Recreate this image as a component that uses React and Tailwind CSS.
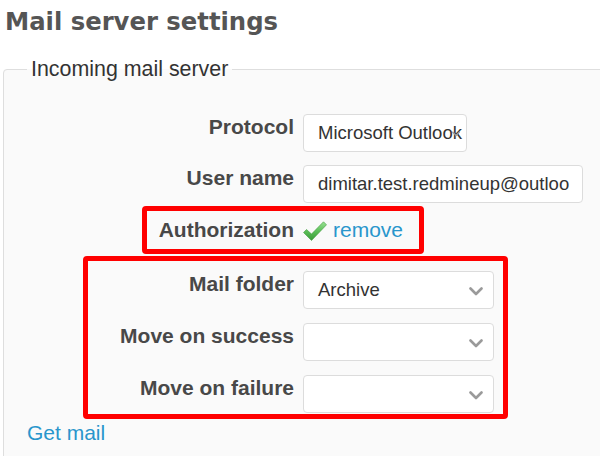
import React from 'react';

const SANS = { fontFamily: '"Liberation Sans", Arial, sans-serif' };

function Chevron({ className = '' }) {
  return (
    <svg viewBox="0 0 14 9" className={className} fill="none">
      <path d="M1.5 1.5 L7 7 L12.5 1.5" stroke="#9a9a9a" strokeWidth="2.6" strokeLinecap="round" strokeLinejoin="round" />
    </svg>
  );
}

function Check() {
  return (
    <svg viewBox="0 0 24 20" className="w-[24px] h-[20px]">
      <defs>
        <linearGradient id="chk" x1="0" y1="0" x2="0" y2="1">
          <stop offset="0" stopColor="#9be295" />
          <stop offset="0.5" stopColor="#5cbf58" />
          <stop offset="1" stopColor="#3a9a38" />
        </linearGradient>
      </defs>
      <polygon points="0.5,11.5 3.5,8.5 8.5,13 20.5,0.8 23.5,3.8 8.5,19.5" fill="url(#chk)" stroke="#3f9a3d" strokeWidth="0.6" strokeLinejoin="round" />
    </svg>
  );
}

function Select({ value, width }) {
  return (
    <div className={`relative h-[38px] bg-white border border-[#dcdcdc] rounded-[4px] flex items-center pl-[14px] overflow-hidden ${width}`}>
      <span className="text-[18.5px] leading-[22px] text-[#333] whitespace-nowrap relative z-10">{value}</span>
      <Chevron className="absolute right-[10px] top-[15px] w-[14px] h-[9px]" />
    </div>
  );
}

function Label({ children, width }) {
  return (
    <div className={`${width} shrink-0 text-right font-bold text-[21px] leading-[24px] pt-[1px] text-[#484848] whitespace-nowrap`}>
      {children}
    </div>
  );
}

export default function App() {
  return (
    <div className="w-[600px] h-[456px] overflow-hidden bg-white" style={SANS}>
      <h2
        className="ml-[5px] pt-[8px] text-[24.3px] leading-[28px] font-bold text-[#555]"
        style={{ fontFamily: '"DejaVu Sans", Verdana, sans-serif' }}
      >
        Mail server settings
      </h2>

      <fieldset className="mt-[21px] ml-[3px] w-[640px] h-[420px] border border-[#dedede] rounded-[4px] bg-[#fafafa]">
        <legend className="ml-[23px] px-[4px] text-[21.4px] leading-[24px] text-[#333]">Incoming mail server</legend>

        <div className="pt-[33px] flex flex-col">
          <div className="flex items-start gap-[9px]">
            <Label width="w-[290px]">Protocol</Label>
            <div className="relative w-[164px] h-[38px] bg-white border border-[#dcdcdc] rounded-[4px] flex items-center pl-[14px] overflow-hidden">
              <Chevron className="absolute right-[6px] top-[16px] w-[8px] h-[6px]" />
              <span className="text-[18.5px] leading-[22px] text-[#333] whitespace-nowrap">Microsoft Outlook</span>
            </div>
          </div>

          <div className="flex items-start gap-[9px] mt-[13px]">
            <Label width="w-[290px]">User name</Label>
            <div className="w-[280px] h-[38px] bg-white border border-[#dcdcdc] rounded-[4px] flex items-center pl-[14px] overflow-hidden">
              <span className="text-[18.5px] leading-[22px] text-[#333] whitespace-nowrap">dimitar.test.redmineup@outloo</span>
            </div>
          </div>

          <div className="ml-[138px] mt-[3px] w-[282px] h-[48px] border-[5px] border-[#ff0000] rounded-[4px] flex items-start gap-[9px] pt-[6px]">
            <Label width="w-[147px]">Authorization</Label>
            <div className="flex items-start gap-[6px]">
              <div className="pt-[4px]"><Check /></div>
              <a className="text-[21px] leading-[24px] pt-[1px] text-[#2996cc]">remove</a>
            </div>
          </div>

          <div className="ml-[79px] mt-[2px] w-[425px] border-[5px] border-[#ff0000] rounded-[4px] flex flex-col gap-[14px] pt-[10px] pb-[1px]">
            <div className="flex items-start gap-[9px]">
              <Label width="w-[206px]">Mail folder</Label>
              <Select value="Archive" width="w-[191px]" />
            </div>
            <div className="flex items-start gap-[9px]">
              <Label width="w-[206px]">Move on success</Label>
              <Select value="" width="w-[191px]" />
            </div>
            <div className="flex items-start gap-[9px]">
              <Label width="w-[206px]">Move on failure</Label>
              <Select value="" width="w-[191px]" />
            </div>
          </div>

          <a className="ml-[23px] mt-[2px] text-[21px] leading-[24px] text-[#2996cc]">Get mail</a>
        </div>
      </fieldset>
    </div>
  );
}
